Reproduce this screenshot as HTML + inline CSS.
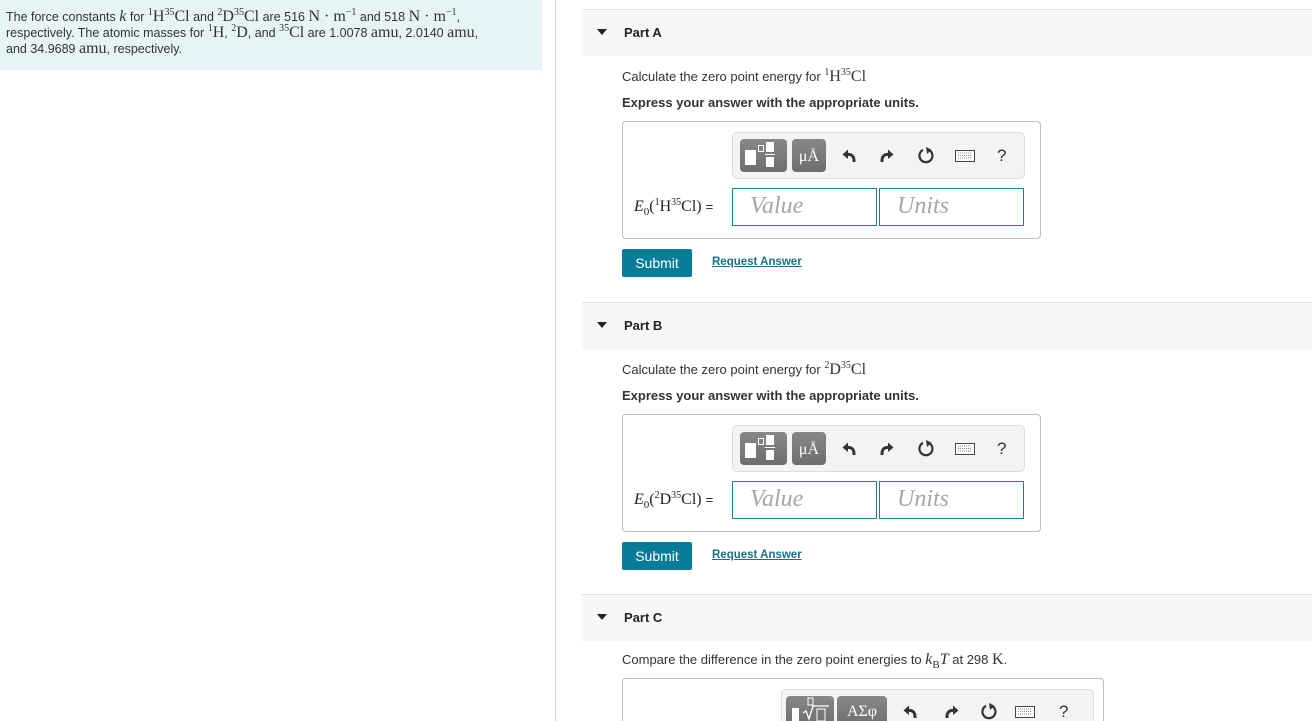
<!DOCTYPE html>
<html><head><meta charset="utf-8"><style>
*{margin:0;padding:0;box-sizing:border-box}
html,body{width:1312px;height:721px;overflow:hidden}
body{background:#fff;font-family:"Liberation Sans",sans-serif;color:#222;position:relative}
.a{position:absolute}
.m{font-family:"Liberation Serif",serif}
sup{font-size:10px;vertical-align:6px;line-height:0}
.left{left:0;top:0;width:542px;height:70px;background:#e6f4f6;font-size:12.5px;line-height:16px;padding:9px 6px 0;color:#333}
.left .m{font-size:16px}
.div{left:555px;top:0;width:1px;height:721px;background:#c9d4de}
.band{left:582px;width:730px;height:47px;background:#f7f7f7;border-top:1px solid #e3e3e3}
.band .tri{position:absolute;left:15px;top:19px;width:0;height:0;border-left:5px solid transparent;border-right:5px solid transparent;border-top:6px solid #222}
.band .t{position:absolute;left:42px;top:15px;font-size:13px;font-weight:bold;color:#222}
.txt{font-size:13px;color:#333}
.bold{font-weight:bold;color:#333;font-size:13px}
.box{border:1px solid #bbb;border-radius:4px;background:#fff}
.tb{background:#f3f3f3;border:1px solid #ddd;border-radius:5px}
.btn{background:linear-gradient(#888,#6e6e6e);border-radius:4px}
.inp{border:1px solid #1d7f96;background:#fff;font-family:"Liberation Serif",serif;font-style:italic;font-size:24px;color:#a6a6a6;padding:4px 0 0 17px}
.sub{background:#077c98;color:#fff;font-size:14px;border-radius:2px;text-align:center;line-height:28px}
.req{color:#1a6f8a;font-size:11.5px;font-weight:bold;text-decoration:underline}
.lab{font-family:"Liberation Serif",serif;font-size:16px;color:#222}
.lab .eq{font-family:"Liberation Sans",sans-serif;font-size:13px}
</style></head><body>
<div class="a left">The force constants <i class="m">k</i> for <span class="m"><sup>1</sup>H<sup>35</sup>Cl</span> and <span class="m"><sup>2</sup>D<sup>35</sup>Cl</span> are 516 <span class="m">N · m<sup>−1</sup></span> and 518 <span class="m">N · m<sup>−1</sup></span>,<br>respectively. The atomic masses for <span class="m"><sup>1</sup>H</span>, <span class="m"><sup>2</sup>D</span>, and <span class="m"><sup>35</sup>Cl</span> are 1.0078 <span class="m">amu</span>, 2.0140 <span class="m">amu</span>,<br>and 34.9689 <span class="m">amu</span>, respectively.</div>
<div class="a div"></div>

<div class="a band" style="top:9px"><div class="tri"></div><div class="t">Part A</div></div>
<div class="a txt" style="left:622px;top:68px">Calculate the zero point energy for <span class="m" style="font-size:16px"><sup>1</sup>H<sup>35</sup>Cl</span></div>
<div class="a bold" style="left:622px;top:95px">Express your answer with the appropriate units.</div>
<div class="a box" style="left:622px;top:121px;width:419px;height:118px"></div>
<div class="a tb" style="left:732px;top:132px;width:293px;height:47px"></div>

<div class="a band" style="top:302px"><div class="tri"></div><div class="t">Part B</div></div>
<div class="a txt" style="left:622px;top:361px">Calculate the zero point energy for <span class="m" style="font-size:16px"><sup>2</sup>D<sup>35</sup>Cl</span></div>
<div class="a bold" style="left:622px;top:388px">Express your answer with the appropriate units.</div>
<div class="a box" style="left:622px;top:414px;width:419px;height:118px"></div>
<div class="a tb" style="left:732px;top:425px;width:293px;height:47px"></div>

<div class="a band" style="top:594px"><div class="tri"></div><div class="t">Part C</div></div>
<div class="a txt" style="left:622px;top:651px">Compare the difference in the zero point energies to <span class="m" style="font-size:16px"><i>k</i><sub style="font-size:11px">B</sub><i>T</i></span> at 298 <span class="m" style="font-size:16px">K</span>.</div>
<div class="a box" style="left:622px;top:678px;width:482px;height:60px"></div>
<div class="a tb" style="left:781px;top:689px;width:313px;height:40px"></div>

<div id="ab"></div>
<script>
function tools(y,xs){
 let h='';
 h+=`<svg class="a" style="left:${xs[0]-9}px;top:${y-9}px" width="18" height="18" viewBox="0 0 18 18"><path d="M7 2.5 L1.5 7.5 L7 12 Z" fill="#333"/><path d="M5.5 7.5 Q13.5 6.5 13 15" stroke="#333" stroke-width="3" fill="none"/></svg>`;
 h+=`<svg class="a" style="left:${xs[1]-9}px;top:${y-9}px" width="18" height="18" viewBox="0 0 18 18"><path d="M11 2.5 L16.5 7.5 L11 12 Z" fill="#333"/><path d="M12.5 7.5 Q4.5 6.5 5 15" stroke="#333" stroke-width="3" fill="none"/></svg>`;
 h+=`<svg class="a" style="left:${xs[2]-10}px;top:${y-10}px" width="20" height="20" viewBox="0 0 20 20"><path d="M14 4.6 A6.5 6.5 0 1 1 7 3.9" stroke="#333" stroke-width="2.2" fill="none"/><path d="M10 1 L15.5 3.8 L11 8 Z" fill="#333"/></svg>`;
 h+=`<svg class="a" style="left:${xs[3]-10}px;top:${y-6}px" width="20" height="12" viewBox="0 0 20 12"><rect x="0.5" y="0.5" width="19" height="11" fill="#fff" stroke="#444"/><path d="M3 3h14M3 5.5h14M3 8h14" stroke="#888" stroke-width="1" stroke-dasharray="1 1"/></svg>`;
 h+=`<div class="a" style="left:${xs[4]-5}px;top:${y-10}px;font-size:17px;color:#333">?</div>`;
 return h;
}
function part(dy,lab){
 let h='';
 h+=`<div class="a btn" style="left:740px;top:${139+dy}px;width:47px;height:33px"></div>`;
 h+=`<div class="a" style="left:745px;top:${150+dy}px;width:11px;height:15px;background:#fff"></div>`;
 h+=`<div class="a" style="left:758px;top:${145+dy}px;width:6px;height:7px;border:1px solid #fff"></div>`;
 h+=`<div class="a" style="left:766px;top:${142+dy}px;width:8px;height:10px;background:#fff"></div>`;
 h+=`<div class="a" style="left:765px;top:${154+dy}px;width:10px;height:1px;background:#fff"></div>`;
 h+=`<div class="a" style="left:766px;top:${157+dy}px;width:8px;height:10px;background:#fff"></div>`;
 h+=`<div class="a btn m" style="left:792px;top:${139+dy}px;width:34px;height:33px;color:#fff;font-size:16px;text-align:center;line-height:36px">μÅ</div>`;
 h+=tools(156+dy,[850,886,926,965,1002]);
 h+=`<div class="a lab" style="left:634px;top:${198+dy}px">${lab} <span class="eq">=</span></div>`;
 h+=`<div class="a inp" style="left:732px;top:${188+dy}px;width:145px;height:38px">Value</div>`;
 h+=`<div class="a inp" style="left:879px;top:${188+dy}px;width:145px;height:38px">Units</div>`;
 h+=`<div class="a sub" style="left:622px;top:${249+dy}px;width:70px;height:28px">Submit</div>`;
 h+=`<div class="a req" style="left:712px;top:${256+dy}px">Request Answer</div>`;
 return h;
}
const E='<i>E</i><sub style="font-size:11px">0</sub>';
let h=part(0,E+'(<sup>1</sup>H<sup>35</sup>Cl)')+part(293,E+'(<sup>2</sup>D<sup>35</sup>Cl)');
h+=`<div class="a btn" style="left:786px;top:696px;width:48px;height:30px"></div>`;
h+=`<div class="a" style="left:792px;top:708px;width:7px;height:13px;background:#fff"></div>`;
h+=`<svg class="a" style="left:801px;top:697px" width="30" height="26" viewBox="0 0 30 26"><rect x="7" y="1" width="5" height="7" fill="none" stroke="#fff"/><path d="M2 16 L5 14 L8 22 L12 9 H28" stroke="#fff" stroke-width="1.3" fill="none"/><rect x="16" y="12" width="8" height="12" fill="none" stroke="#fff"/></svg>`;
h+=`<div class="a btn m" style="left:837px;top:696px;width:50px;height:30px;color:#fff;font-size:16px;text-align:center;line-height:32px">ΑΣφ</div>`;
h+=tools(712,[911,951,989,1025,1064]);
document.getElementById('ab').innerHTML=h;
</script>
</body></html>
